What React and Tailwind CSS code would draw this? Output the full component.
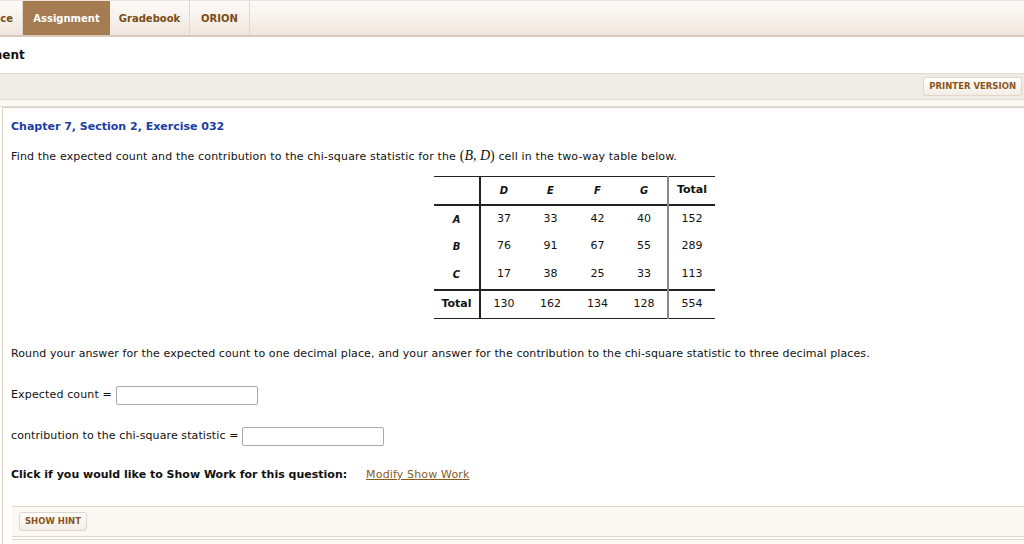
export default function App() {
  const rows = [
    ['A', 37, 33, 42, 40, 152],
    ['B', 76, 91, 67, 55, 289],
    ['C', 17, 38, 25, 33, 113],
  ]
  const totals = [130, 162, 134, 128, 554]

  return (
    <div className="w-[1024px] h-[544px] overflow-hidden bg-white text-[11px] text-[#111]" style={{ fontFamily: '"DejaVu Sans", Verdana, sans-serif' }}>
      {/* Tabs */}
      <div className="h-[37px] flex bg-gradient-to-b from-[#fdfbf8] to-[#efe7df] border-b-2 border-[#d8c9bb] border-t border-t-[#ece4dc] text-[10px] font-bold">
        <div className="w-[23px] overflow-hidden flex items-center justify-end border-r border-[#e3d8cd]">
          <span className="text-[#7b4b16] whitespace-nowrap pr-[9px]">ce</span>
        </div>
        <div className="w-[87px] flex items-center justify-center bg-[#a57b52] text-white pt-[1px]">Assignment</div>
        <div className="w-[80px] flex items-center justify-center border-r border-[#e3d8cd] text-[#7b4b16] pt-[1px]">Gradebook</div>
        <div className="w-[60px] flex items-center justify-center border-r border-[#e3d8cd] text-[#7b4b16] pt-[1px]">ORION</div>
      </div>

      {/* Page title */}
      <div className="h-[36px] flex items-center overflow-hidden">
        <h1 className="font-bold text-[12px] ml-[-55px] whitespace-nowrap">Assignment</h1>
      </div>

      {/* Toolbar */}
      <div className="h-[27px] bg-[#efebe6] border-t border-b border-[#e2d9d0] flex items-center justify-end pr-[2px]">
        <button className="h-[19px] px-[5px] rounded-[3px] border border-[#e0d6cc] bg-gradient-to-b from-white to-[#f3ede6] text-[8.5px] font-bold text-[#8a5420]">PRINTER VERSION</button>
      </div>
      <div className="h-[7px] bg-[#fbf9f6] border-b border-[#e6ded5]"></div>

      {/* Question box */}
      <div className="ml-[2px] border-l border-t border-[#dcd0c4] pl-[8px] pt-[10px]">
        <h2 className="font-bold text-[11px] text-[#1b3da3] h-[18px] leading-[18px]">Chapter 7, Section 2, Exercise 032</h2>
        <p className="mt-[12px] leading-[15px] tracking-[0.15px]">
          Find the expected count and the contribution to the chi-square statistic for the{' '}
          <span className="text-[14px] italic tracking-normal" style={{ fontFamily: '"Liberation Serif", serif' }}>
            <span className="not-italic">(</span>B<span className="not-italic">, </span>D<span className="not-italic">)</span>
          </span>{' '}
          cell in the two-way table below.
        </p>

        <div className="mt-[12px] ml-[423px]">
          <table className="border-collapse text-center">
            <thead>
              <tr className="h-[28px] border-t border-b-2 border-[#222]">
                <th className="w-[46px] border-r-2 border-[#222]"></th>
                {['D', 'E', 'F', 'G'].map(h => (
                  <th key={h} className="w-[47px] italic font-bold text-[10px]">{h}</th>
                ))}
                <th className="w-[47px] border-l-2 border-[#888] font-bold">Total</th>
              </tr>
            </thead>
            <tbody>
              {rows.map((r, i) => (
                <tr key={r[0]} className={i === 2 ? 'h-[29px] border-b-2 border-[#222]' : 'h-[28px]'}>
                  <td className="border-r-2 border-[#222] italic font-bold text-[10px]">{r[0]}</td>
                  {r.slice(1, 5).map((v, j) => (
                    <td key={j}>{v}</td>
                  ))}
                  <td className="border-l-2 border-[#888]">{r[5]}</td>
                </tr>
              ))}
              <tr className="h-[29px] border-b border-[#222]">
                <td className="border-r-2 border-[#222] font-bold">Total</td>
                {totals.slice(0, 4).map((v, j) => (
                  <td key={j}>{v}</td>
                ))}
                <td className="border-l-2 border-[#888]">{totals[4]}</td>
              </tr>
            </tbody>
          </table>
        </div>

        <p className="mt-[27px] leading-[15px] tracking-[0.1px]">
          Round your answer for the expected count to one decimal place, and your answer for the contribution to the chi-square statistic to three decimal places.
        </p>

        <div className="mt-[25px] flex items-center tracking-[0.15px]">
          <span>Expected count =</span>
          <input className="ml-[4px] w-[142px] h-[19px] border border-[#aaa] rounded-[2px] bg-white" />
        </div>

        <div className="mt-[22px] flex items-center tracking-[0.1px]">
          <span>contribution to the chi-square statistic =</span>
          <input className="ml-[4px] w-[142px] h-[19px] border border-[#aaa] rounded-[2px] bg-white" />
        </div>

        <div className="mt-[21px] flex items-center">
          <span className="font-bold">Click if you would like to Show Work for this question:</span>
          <a className="ml-[19px] text-[#8a5a1a] underline tracking-[0.15px]">Modify Show Work</a>
        </div>

        <div className="mt-[22px] ml-[1px] border-t border-b border-[#ded5cb] bg-[#fbf8f4] h-[31px] flex items-center pl-[7px]">
          <button className="h-[19px] px-[5px] rounded-[3px] border border-[#e0d6cc] bg-gradient-to-b from-white to-[#f3ede6] text-[8.5px] font-bold text-[#8a5420]">SHOW HINT</button>
        </div>
        <div className="ml-[1px] mt-[2px] bg-[#fbf8f4] border-t border-[#ded5cb] h-[20px] pl-[7px] pt-[4px]">
          <div className="w-[72px] h-[19px] rounded-[3px] border border-[#e0d6cc] bg-white"></div>
        </div>
      </div>
    </div>
  )
}
